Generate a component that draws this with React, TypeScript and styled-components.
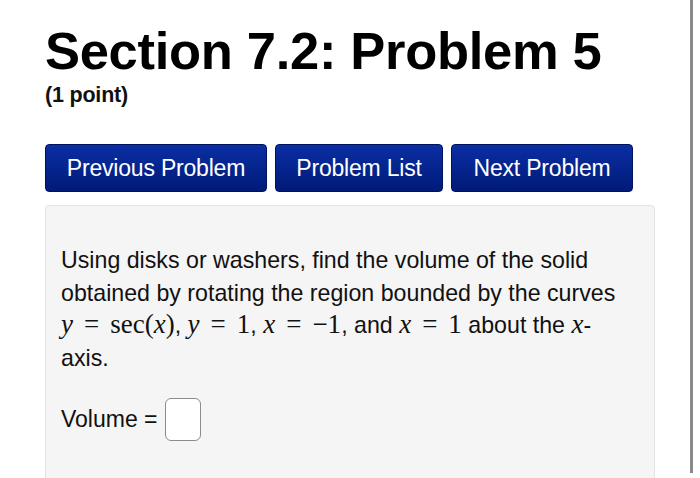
import React from "react";
import styled, { createGlobalStyle } from "styled-components";

const GlobalStyle = createGlobalStyle`
  html, body {
    margin: 0;
    padding: 0;
    background: #ffffff;
  }
  body {
    font-family: "Liberation Sans", Arial, sans-serif;
    color: #111;
  }
`;

const Page = styled.div`
  display: flex;
  width: 700px;
  height: 478px;
  overflow: hidden;
`;

const Content = styled.div`
  flex: 1;
  padding: 21px 0 0 45px;
  min-width: 0;
`;

const Scrollbar = styled.div`
  width: 3px;
  height: 473px;
  margin-right: 7px;
  background: #8a8a8a;
`;

const Title = styled.h1`
  margin: 0;
  font-size: 52.5px;
  font-weight: 700;
  line-height: 60px;
  letter-spacing: -0.3px;
  color: #000;
`;

const Points = styled.div`
  margin-top: 2px;
  font-size: 21.5px;
  font-weight: 700;
  line-height: 24px;
  letter-spacing: -0.2px;
`;

const ButtonRow = styled.div`
  display: flex;
  gap: 8px;
  margin-top: 37px;
`;

const NavButton = styled.button<{ $w: number }>`
  width: ${(p) => p.$w}px;
  height: 48px;
  border: 1px solid #00125e;
  border-radius: 4px;
  background: linear-gradient(#0a2fa3, #001a78);
  color: #fff;
  font-family: "Liberation Sans", Arial, sans-serif;
  font-size: 23px;
  letter-spacing: -0.2px;
  padding: 0;
  cursor: pointer;
`;

const Panel = styled.div`
  margin-top: 13px;
  width: 610px;
  height: 300px;
  box-sizing: border-box;
  background: #f5f5f5;
  border: 1px solid #e3e3e3;
  border-radius: 4px;
  padding: 38px 26px 0 15px;
`;

const Paragraph = styled.p`
  margin: 0;
  font-size: 23.2px;
  line-height: 32.5px;
  color: #111;
`;

// math pieces: upright symbols, italic variables, relation with spacing
const M = styled.span`
  font-family: "Liberation Serif", "Times New Roman", serif;
  font-size: 27px;
  line-height: 1;
`;

const V = styled.i`
  font-family: "Liberation Serif", "Times New Roman", serif;
  font-size: 27px;
  line-height: 1;
`;

const Eq = styled.span`
  font-family: "Liberation Serif", "Times New Roman", serif;
  font-size: 27px;
  line-height: 1;
  margin: 0 11px;
`;

const AnswerRow = styled.div`
  display: flex;
  align-items: center;
  margin-top: 24px;
  font-size: 23px;
`;

const AnswerBox = styled.input`
  width: 36px;
  height: 43px;
  box-sizing: border-box;
  margin-left: 7px;
  border: 1.5px solid #8c8c8c;
  border-radius: 6px;
  background: #fff;
  outline: none;
`;

export default function App() {
  return (
    <>
      <GlobalStyle />
      <Page>
        <Content>
          <Title>Section 7.2: Problem 5</Title>
          <Points>(1 point)</Points>
          <ButtonRow>
            <NavButton $w={222}>Previous Problem</NavButton>
            <NavButton $w={168}>Problem List</NavButton>
            <NavButton $w={182}>Next Problem</NavButton>
          </ButtonRow>
          <Panel>
            <Paragraph>
              Using disks or washers, find the volume of the solid obtained by
              rotating the region bounded by the curves{" "}
              <V>y</V>
              <Eq>=</Eq>
              <M>sec(</M>
              <V>x</V>
              <M>)</M>, <V>y</V>
              <Eq>=</Eq>
              <M>1</M>, <V>x</V>
              <Eq>=</Eq>
              <M>−1</M>, and <V>x</V>
              <Eq>=</Eq>
              <M>1</M> about the <V>x</V>-axis.
            </Paragraph>
            <AnswerRow>
              Volume =<AnswerBox type="text" />
            </AnswerRow>
          </Panel>
        </Content>
        <Scrollbar />
      </Page>
    </>
  );
}
